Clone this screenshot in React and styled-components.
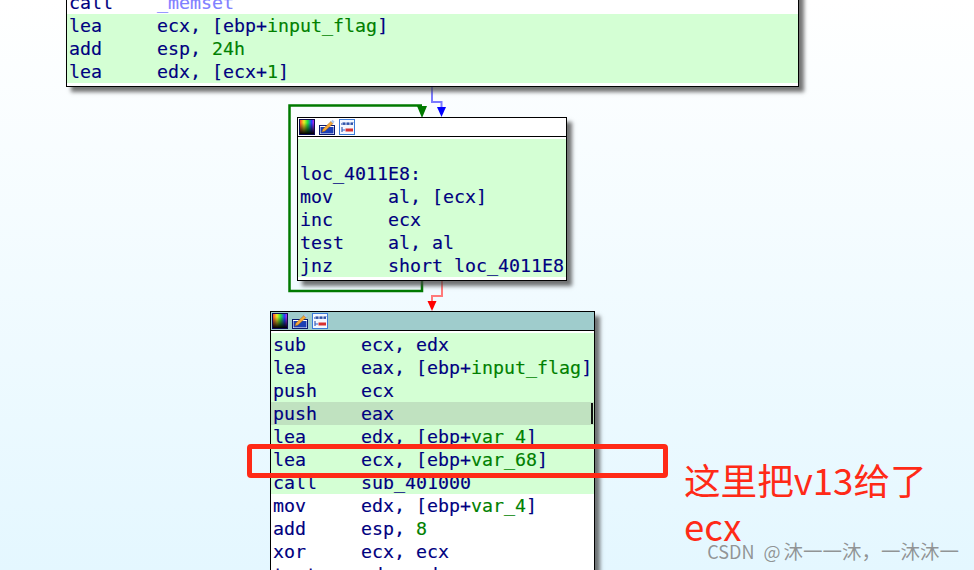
import React from 'react'
import styled, { createGlobalStyle } from 'styled-components'

const GlobalStyle = createGlobalStyle`
  html, body {
    margin: 0;
    padding: 0;
    overflow: hidden;
  }
`

const Canvas = styled.div`
  position: relative;
  width: 974px;
  height: 570px;
  overflow: hidden;
  background: linear-gradient(180deg, #ffffff 0%, #e4f7ff 100%);
  font-family: "DejaVu Sans Mono", "Liberation Mono", monospace;
`

const Edges = styled.svg`
  position: absolute;
  left: 0;
  top: 0;
`

const Node = styled.div`
  position: absolute;
  left: ${p => p.$left}px;
  top: ${p => p.$top}px;
  width: ${p => p.$width}px;
  height: ${p => p.$height}px;
  box-sizing: border-box;
  border: 1px solid #000;
  background: #fff;
  box-shadow: 5px 5px 4px rgba(70, 70, 70, 0.75);
`

const Header = styled.div`
  display: flex;
  align-items: center;
  gap: 4px;
  height: 18px;
  padding-left: 1px;
  border-bottom: 1px solid #000;
  background: ${p => p.$active ? '#9fcccc' : '#fff'};
`

const Body = styled.div`
  display: flex;
  flex-direction: column;
  padding-top: ${p => p.$pad || 0}px;
`

const Row = styled.div`
  position: relative;
  display: flex;
  height: 23px;
  line-height: 23px;
  padding-left: 2px;
  font-size: 18.3px;
  white-space: pre;
  color: #000080;
  -webkit-text-stroke: 0.15px currentColor;
  background: ${p => p.$bg || '#d4ffd4'};
`

const Mnemonic = styled.span`
  width: 88px;
  flex: none;
`

const Name = styled.span`
  color: #008000;
`

const Func = styled.span`
  color: #8080ff;
`

const Caret = styled.span`
  position: absolute;
  right: 1px;
  top: 1px;
  width: 2px;
  height: 21px;
  background: #111;
`

const Marker = styled.div`
  position: absolute;
  left: 247px;
  top: 444px;
  width: 421px;
  height: 34px;
  box-sizing: border-box;
  border: 5px solid #ff2a17;
  border-radius: 4px;
`

const Note = styled.div`
  position: absolute;
  left: 684px;
  top: 457px;
  width: 250px;
  font-family: "Noto Sans CJK SC", "Liberation Sans", sans-serif;
  font-size: 36.6px;
  line-height: 46px;
  color: #ff2a17;
`

const Watermark = styled.div`
  position: absolute;
  right: 15px;
  top: 538px;
  font-family: "Noto Sans CJK SC", "Liberation Sans", sans-serif;
  font-size: 18px;
  line-height: 26px;
  word-spacing: 5px;
  color: rgba(130, 130, 130, 0.85);
  white-space: nowrap;
`

const Handle = styled.span`
  margin-left: 3px;
  font-size: 19.5px;
`

function GraphIcons({ id }) {
  return (
    <>
      <svg width="16" height="16" viewBox="0 0 16 16">
        <defs>
          <linearGradient id={`hue-${id}`} x1="0" x2="1" y1="0" y2="0">
            <stop offset="0" stopColor="#ff3030" />
            <stop offset="0.3" stopColor="#f0f020" />
            <stop offset="0.55" stopColor="#20e040" />
            <stop offset="0.8" stopColor="#2040ff" />
            <stop offset="1" stopColor="#e020e0" />
          </linearGradient>
          <linearGradient id={`shade-${id}`} x1="0" x2="0" y1="0" y2="1">
            <stop offset="0.2" stopColor="#000" stopOpacity="0" />
            <stop offset="1" stopColor="#000" stopOpacity="1" />
          </linearGradient>
        </defs>
        <rect x="0.5" y="0.5" width="15" height="15" fill={`url(#hue-${id})`} stroke="#0a0a50" />
        <rect x="1" y="1" width="14" height="14" fill={`url(#shade-${id})`} />
      </svg>
      <svg width="16" height="16" viewBox="0 0 16 16">
        <rect x="0.5" y="6.5" width="15" height="9" fill="#fff" stroke="#0a1a70" />
        <rect x="1.5" y="8" width="13" height="6.5" fill="#1c3fb4" />
        <path d="M3 13 L4 10 L12 2.5 L14 4.5 L6 12 Z" fill="#f5a838" stroke="#9a6010" strokeWidth="0.5" />
        <path d="M12 2.5 L13.6 0.8 L15.5 2.8 L14 4.5 Z" fill="#a8c8f0" />
      </svg>
      <svg width="16" height="16" viewBox="0 0 16 16">
        <rect x="0.5" y="0.5" width="15" height="15" fill="#f4f8ff" stroke="#3a7ad8" />
        <path d="M2 5 H14" stroke="#1a40a0" strokeWidth="1" />
        <path d="M4 3 L5 6 L6 3 M8 3 L9 6 L10 3 M12 3 L13 6 L14 3" fill="none" stroke="#1a40a0" strokeWidth="0.8" />
        <path d="M3 8 V13" stroke="#1a40a0" strokeWidth="1" />
        <rect x="6.5" y="9.5" width="7.5" height="3" fill="#d83030" />
        <path d="M3 11 H6" stroke="#3060d0" strokeWidth="1" />
      </svg>
    </>
  )
}

function App() {
  return (
    <Canvas>
      <GlobalStyle />

      <Edges width="974" height="570" viewBox="0 0 974 570">
        <path d="M432 86 V102 H441.5 V108" fill="none" stroke="#7a7aff" strokeWidth="2" />
        <path d="M437 107 H446 L441.5 117 Z" fill="#0000ff" />
        <path d="M422 280 V291 H289.5 V105.5 H422" fill="none" stroke="#007a00" strokeWidth="2.5" />
        <path d="M417 106 H427 L422 118 Z" fill="#007a00" />
        <path d="M442 280 V296 H432 V302" fill="none" stroke="#ff7a7a" strokeWidth="2" />
        <path d="M427.5 301 H436.5 L432 311 Z" fill="#ff0000" />
      </Edges>

      <Node $left={66} $top={-10} $width={733} $height={97}>
        <Body>
          <Row $bg="#fff"><Mnemonic>call</Mnemonic><Func>_memset</Func></Row>
          <Row>
            <Mnemonic>lea</Mnemonic>ecx, [ebp+<Name>input_flag</Name>]
          </Row>
          <Row>
            <Mnemonic>add</Mnemonic>esp, <Name>24h</Name>
          </Row>
          <Row>
            <Mnemonic>lea</Mnemonic>edx, [ecx+<Name>1</Name>]
          </Row>
        </Body>
      </Node>

      <Node $left={297} $top={117} $width={270} $height={164}>
        <Header><GraphIcons id="a" /></Header>
        <Body $pad={2}>
          <Row />
          <Row>loc_4011E8:</Row>
          <Row><Mnemonic>mov</Mnemonic>al, [ecx]</Row>
          <Row><Mnemonic>inc</Mnemonic>ecx</Row>
          <Row><Mnemonic>test</Mnemonic>al, al</Row>
          <Row><Mnemonic>jnz</Mnemonic>short loc_4011E8</Row>
        </Body>
      </Node>

      <Node $left={270} $top={311} $width={325} $height={290}>
        <Header $active><GraphIcons id="b" /></Header>
        <Body $pad={2}>
          <Row><Mnemonic>sub</Mnemonic>ecx, edx</Row>
          <Row><Mnemonic>lea</Mnemonic>eax, [ebp+<Name>input_flag</Name>]</Row>
          <Row><Mnemonic>push</Mnemonic>ecx</Row>
          <Row $bg="#c0e2c0"><Mnemonic>push</Mnemonic>eax<Caret /></Row>
          <Row><Mnemonic>lea</Mnemonic>edx, [ebp+<Name>var_4</Name>]</Row>
          <Row><Mnemonic>lea</Mnemonic>ecx, [ebp+<Name>var_68</Name>]</Row>
          <Row><Mnemonic>call</Mnemonic>sub_401000</Row>
          <Row $bg="#fff"><Mnemonic>mov</Mnemonic>edx, [ebp+<Name>var_4</Name>]</Row>
          <Row $bg="#fff"><Mnemonic>add</Mnemonic>esp, <Name>8</Name></Row>
          <Row $bg="#fff"><Mnemonic>xor</Mnemonic>ecx, ecx</Row>
          <Row $bg="#fff"><Mnemonic>test</Mnemonic>edx, edx</Row>
        </Body>
      </Node>

      <Marker />
      <Note>这里把v13给了 ecx</Note>
      <Watermark>CSDN @<Handle>沐一一沐，一沐沐一</Handle></Watermark>
    </Canvas>
  )
}

export default App
